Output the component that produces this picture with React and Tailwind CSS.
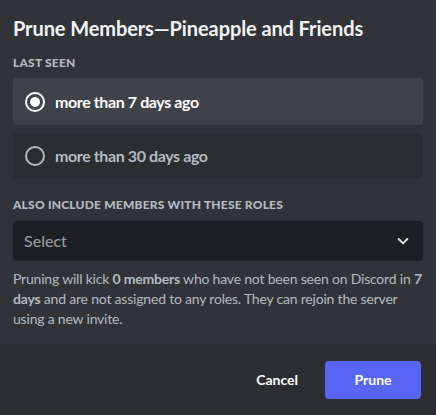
import React from "react";

export default function App() {
  return (
    <div
      className="w-[436px] h-[415px] bg-[#313338] flex flex-col overflow-hidden"
      style={{ fontFamily: 'Lato, "Noto Sans", sans-serif' }}
    >
      <div className="flex-1 px-[13px] pt-[15px]">
        <h1 className="text-[20px] leading-[26px] font-bold text-[#f2f3f5] tracking-[-0.1px]">
          Prune Members—Pineapple and Friends
        </h1>
        <div className="mt-[14px] text-[12px] leading-[16px] font-black uppercase text-[#b5bac1] tracking-[0.2px]">
          Last seen
        </div>
        <div className="mt-[7px] flex flex-col gap-[8px]">
          <div className="h-[47px] rounded-[4px] bg-[#404249] flex items-center pl-[12px]">
            <span className="w-[20px] h-[20px] rounded-full border-[2px] border-white flex items-center justify-center">
              <span className="w-[10px] h-[10px] rounded-full bg-white" />
            </span>
            <span className="ml-[10px] text-[16px] font-bold text-white tracking-[-0.4px]">
              more than 7 days ago
            </span>
          </div>
          <div className="h-[46px] rounded-[4px] bg-[#2b2d31] flex items-center pl-[12px]">
            <span className="w-[20px] h-[20px] rounded-full border-[2px] border-[#b5bac1]" />
            <span className="ml-[10px] text-[16px] font-bold text-[#b5bac1] tracking-[-0.4px]">
              more than 30 days ago
            </span>
          </div>
        </div>
        <div className="mt-[18px] text-[12px] leading-[16px] font-black uppercase text-[#b5bac1] tracking-[0.2px]">
          Also include members with these roles
        </div>
        <div className="mt-[8px] h-[40px] rounded-[4px] bg-[#1e1f22] flex items-center justify-between pl-[11px] pr-[12px]">
          <span className="text-[16px] font-medium text-[#949ba4]">Select</span>
          <svg width="16" height="16" viewBox="0 0 24 24" fill="none">
            <path
              d="M5.5 9l6.5 6.5L18.5 9"
              stroke="#dbdee1"
              strokeWidth="3"
              strokeLinecap="round"
              strokeLinejoin="round"
            />
          </svg>
        </div>
        <p className="mt-[8px] text-[14px] leading-[20px] text-[#b5bac1] tracking-[-0.2px]">
          Pruning will kick <strong className="font-bold">0 members</strong> who have not been seen on
          Discord in <strong className="font-bold">7 days</strong> and are not assigned to any roles.
          They can rejoin the server using a new invite.
        </p>
      </div>
      <div className="h-[71px] bg-[#2b2d31] flex items-center justify-end px-[15px]">
        <button className="h-[38px] px-[16px] text-[14px] font-bold text-white">Cancel</button>
        <button className="ml-[11px] h-[38px] w-[96px] rounded-[4px] bg-[#5865f2] text-[14px] font-bold text-white">
          Prune
        </button>
      </div>
    </div>
  );
}
